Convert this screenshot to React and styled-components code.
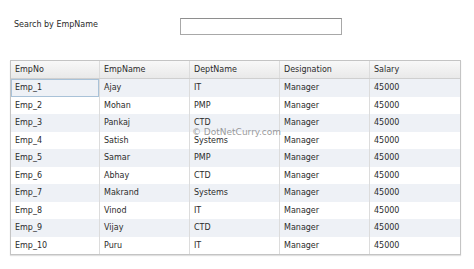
import styled, { createGlobalStyle } from "styled-components";

const GlobalStyle = createGlobalStyle`
  html, body {
    margin: 0;
    padding: 0;
    background: #ffffff;
  }
  body {
    font-family: "DejaVu Sans", Verdana, sans-serif;
    color: #333;
  }
`;

const Page = styled.div`
  position: relative;
  width: 474px;
  height: 269px;
  padding: 18px 0 0 10px;
  box-sizing: border-box;
`;

const SearchRow = styled.div`
  display: flex;
  align-items: center;
  height: 17px;
`;

const SearchLabel = styled.label`
  font-size: 8px;
  color: #2a2a2a;
  width: 166px;
  padding-left: 4px;
  margin-top: -4px;
`;

const SearchInput = styled.input`
  width: 162px;
  height: 17px;
  box-sizing: border-box;
  border: 1px solid #a8a8a8;
  border-top-color: #8e8e8e;
  background: #fff;
  margin: 0;
  padding: 0 4px;
  outline: none;
`;

const Grid = styled.div`
  margin-top: 25px;
  width: 451px;
  border: 1px solid #c4c4c4;
  box-shadow: 0 1px 1px rgba(0, 0, 0, 0.12);
  box-sizing: border-box;
`;

const Row = styled.div`
  display: grid;
  grid-template-columns: 89px 90px 90px 90px 1fr;
  height: ${(p) => (p.$header ? "17px" : "17.5px")};
  background: ${(p) =>
    p.$header
      ? "linear-gradient(#f8f8f8, #e9e9e9)"
      : p.$alt
      ? "#eef1f6"
      : "#ffffff"};
  border-bottom: ${(p) => (p.$header ? "1px solid #cfcfcf" : "none")};
`;

const Cell = styled.div`
  display: flex;
  align-items: center;
  padding-left: 4px;
  font-size: 8px;
  color: #2b2b2b;
  white-space: nowrap;
  border-right: ${(p) => (p.$last ? "none" : "1px solid #dcdcdc")};
  box-shadow: ${(p) => (p.$focused ? "inset 0 0 0 1px #a9c2d8" : "none")};
`;

const Watermark = styled.div`
  position: absolute;
  left: 192px;
  top: 127px;
  font-size: 9px;
  color: rgba(120, 120, 120, 0.75);
  pointer-events: none;
`;

const columns = ["EmpNo", "EmpName", "DeptName", "Designation", "Salary"];

const employees = [
  ["Emp_1", "Ajay", "IT"],
  ["Emp_2", "Mohan", "PMP"],
  ["Emp_3", "Pankaj", "CTD"],
  ["Emp_4", "Satish", "Systems"],
  ["Emp_5", "Samar", "PMP"],
  ["Emp_6", "Abhay", "CTD"],
  ["Emp_7", "Makrand", "Systems"],
  ["Emp_8", "Vinod", "IT"],
  ["Emp_9", "Vijay", "CTD"],
  ["Emp_10", "Puru", "IT"],
];

export default function App() {
  return (
    <Page>
      <GlobalStyle />
      <SearchRow>
        <SearchLabel>Search by EmpName</SearchLabel>
        <SearchInput type="text" />
      </SearchRow>
      <Grid>
        <Row $header>
          {columns.map((c, i) => (
            <Cell key={c} $last={i === columns.length - 1}>
              {c}
            </Cell>
          ))}
        </Row>
        {employees.map((e, r) => (
          <Row key={e[0]} $alt={r % 2 === 0}>
            <Cell $focused={r === 0}>{e[0]}</Cell>
            <Cell>{e[1]}</Cell>
            <Cell>{e[2]}</Cell>
            <Cell>Manager</Cell>
            <Cell $last>45000</Cell>
          </Row>
        ))}
      </Grid>
      <Watermark>© DotNetCurry.com</Watermark>
    </Page>
  );
}
